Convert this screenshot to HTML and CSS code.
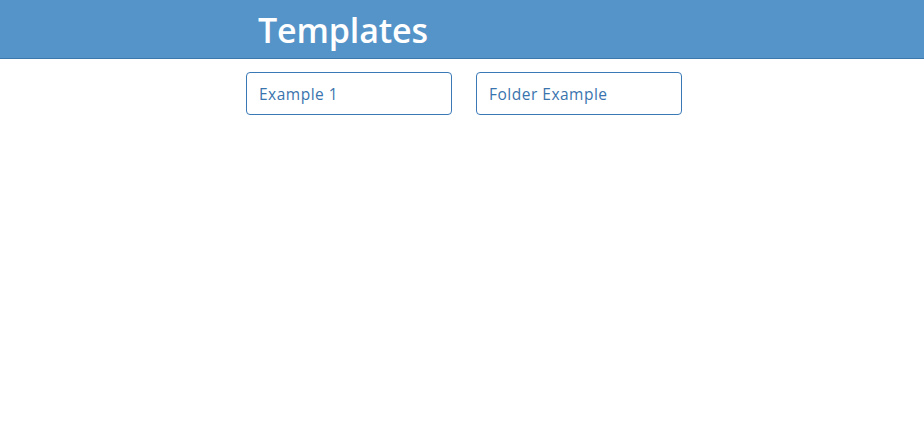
FILE: index.html
```html
<!DOCTYPE html>
<html>
<head>
<meta charset="utf-8">
<link rel="stylesheet" href="styles.css">
</head>
<body>
<header class="topbar">
  <h1 class="title">Templates</h1>
</header>
<main class="templates">
  <a class="card" href="#">Example 1</a>
  <a class="card" href="#">Folder Example</a>
</main>
</body>
</html>
```

FILE: styles.css
```css
html, body {
  margin: 0;
  padding: 0;
  background: #ffffff;
  font-family: "Open Sans", "Inter", sans-serif;
}
.topbar {
  background: #5594c8;
  border-bottom: 1px solid #3d78ad;
  height: 59px;
  box-sizing: border-box;
  display: flex;
  align-items: center;
  padding-left: 258px;
}
.title {
  margin: 0;
  color: #ffffff;
  font-family: "Open Sans", sans-serif;
  font-weight: 600;
  font-size: 34px;
  letter-spacing: -0.15px;
  line-height: 1;
  padding-top: 1px;
}
.templates {
  display: flex;
  gap: 24px;
  padding: 13px 0 0 246px;
}
.card {
  display: flex;
  align-items: center;
  box-sizing: border-box;
  width: 206px;
  height: 43px;
  padding: 0 12px;
  border: 1px solid #3a78b6;
  border-radius: 4px;
  color: #3a74ae;
  text-decoration: none;
  font-size: 15.5px;
  font-weight: 500;
  letter-spacing: 0.5px;
  padding-top: 1px;
}
```
